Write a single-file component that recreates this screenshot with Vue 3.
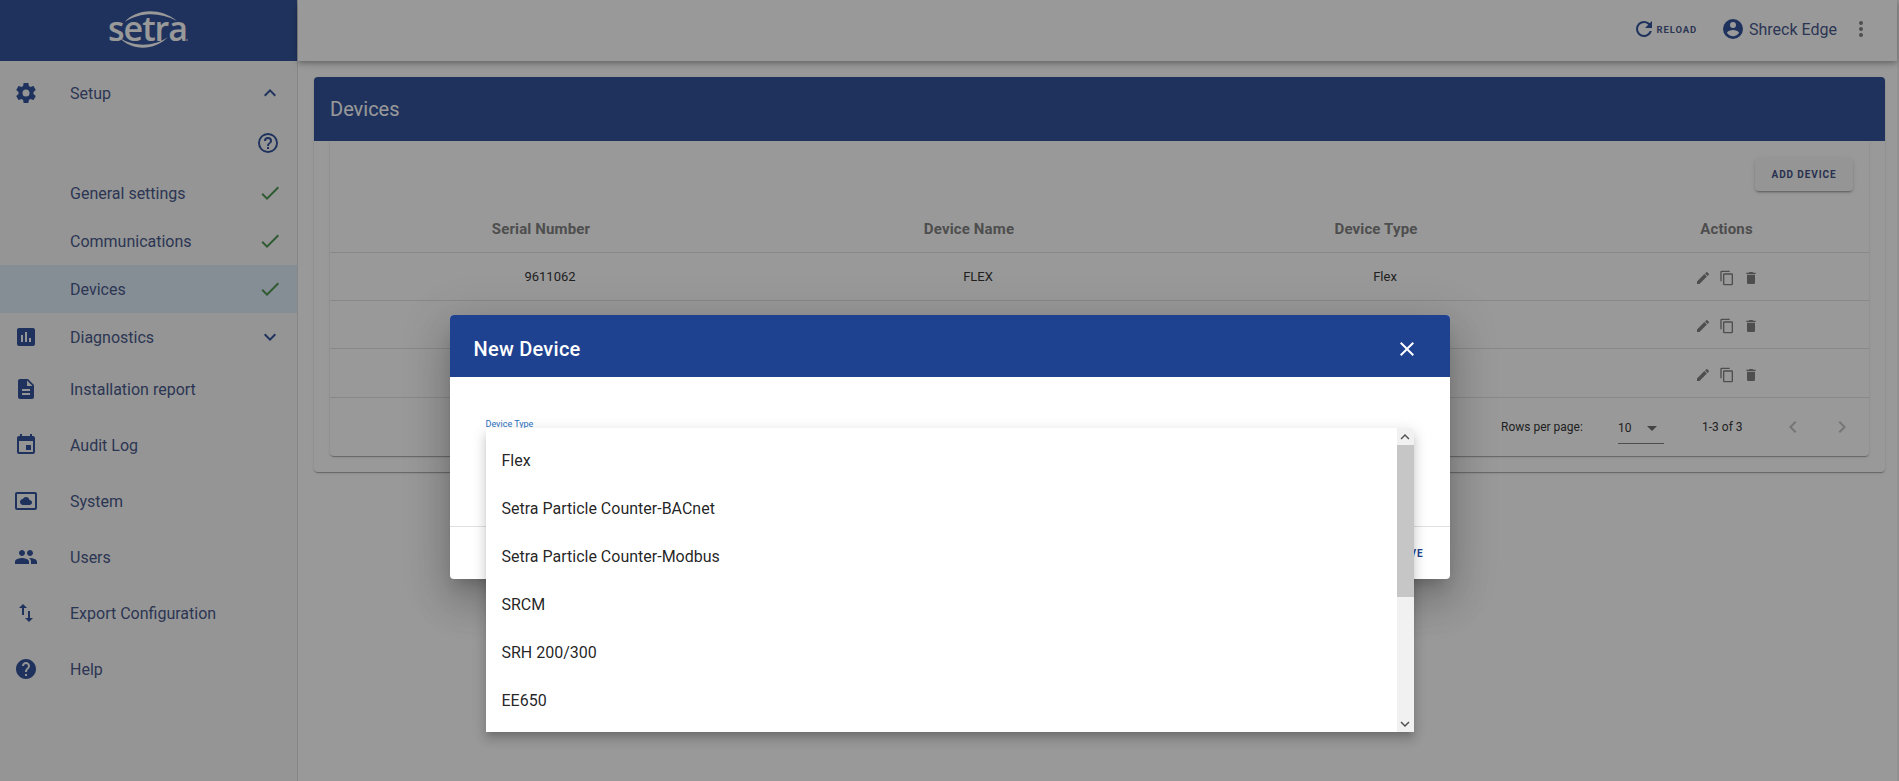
<script setup>
const P = {
  cog: 'M12,15.5A3.5,3.5 0 0,1 8.5,12A3.5,3.5 0 0,1 12,8.5A3.5,3.5 0 0,1 15.5,12A3.5,3.5 0 0,1 12,15.5M19.43,12.97C19.47,12.65 19.5,12.33 19.5,12C19.5,11.67 19.47,11.34 19.43,11L21.54,9.37C21.73,9.22 21.78,8.95 21.66,8.73L19.66,5.27C19.54,5.05 19.27,4.96 19.05,5.05L16.56,6.05C16.04,5.66 15.5,5.32 14.87,5.07L14.5,2.42C14.46,2.18 14.25,2 14,2H10C9.75,2 9.54,2.18 9.5,2.42L9.13,5.07C8.5,5.32 7.96,5.66 7.44,6.05L4.95,5.05C4.73,4.96 4.46,5.05 4.34,5.27L2.34,8.73C2.21,8.95 2.27,9.22 2.46,9.37L4.57,11C4.53,11.34 4.5,11.67 4.5,12C4.5,12.33 4.53,12.65 4.57,12.97L2.46,14.63C2.27,14.78 2.21,15.05 2.34,15.27L4.34,18.73C4.46,18.95 4.73,19.03 4.95,18.95L7.44,17.94C7.96,18.34 8.5,18.68 9.13,18.93L9.5,21.58C9.54,21.82 9.75,22 10,22H14C14.25,22 14.46,21.82 14.5,21.58L14.87,18.93C15.5,18.67 16.04,18.34 16.56,17.94L19.05,18.95C19.27,19.03 19.54,18.95 19.66,18.73L21.66,15.27C21.78,15.05 21.73,14.78 21.54,14.63L19.43,12.97Z',
  up: 'M7.41,15.41L12,10.83L16.59,15.41L18,14L12,8L6,14L7.41,15.41Z',
  down: 'M7.41,8.58L12,13.17L16.59,8.58L18,10L12,16L6,10L7.41,8.58Z',
  helpO: 'M11,18H13V16H11V18M12,2A10,10 0 0,0 2,12A10,10 0 0,0 12,22A10,10 0 0,0 22,12A10,10 0 0,0 12,2M12,20C7.59,20 4,16.41 4,12C4,7.59 7.59,4 12,4C16.41,4 20,7.59 20,12C20,16.41 16.41,20 12,20M12,6A4,4 0 0,0 8,10H10A2,2 0 0,1 12,8A2,2 0 0,1 14,10C14,12 11,11.75 11,15H13C13,12.75 16,12.5 16,10A4,4 0 0,0 12,6Z',
  check: 'M21,7L9,19L3.5,13.5L4.91,12.09L9,16.17L19.59,5.59L21,7Z',
  poll: 'M17,17H15V13H17M13,17H11V7H13M9,17H7V10H9M19,3H5C3.89,3 3,3.89 3,5V19A2,2 0 0,0 5,21H19A2,2 0 0,0 21,19V5C21,3.89 20.1,3 19,3Z',
  doc: 'M14 2H6c-1.1 0-2 .9-2 2v16c0 1.1.9 2 2 2h12c1.1 0 2-.9 2-2V8l-6-6zm2 16H8v-2h8v2zm0-4H8v-2h8v2zm-3-5V3.5L18.5 9H13z',
  event: 'M17 12h-5v5h5v-5zM16 1v2H8V1H6v2H5c-1.11 0-1.99.9-1.99 2L3 19c0 1.1.89 2 2 2h14c1.1 0 2-.9 2-2V5c0-1.1-.9-2-2-2h-1V1h-2zm3 18H5V8h14v11z',
  system: 'M9 16h6.5c1.38 0 2.5-1.12 2.5-2.5S16.88 11 15.5 11h-.05c-.24-1.69-1.69-3-3.45-3-1.4 0-2.6.83-3.16 2.02h-.16C7.17 10.18 6 11.45 6 13c0 1.66 1.34 3 3 3zM21 3H3c-1.1 0-2 .9-2 2v14c0 1.1.9 2 2 2h18c1.1 0 2-.9 2-2V5c0-1.1-.9-2-2-2zm0 16.01H3V4.99h18v14.02z',
  people: 'M16 11c1.66 0 2.99-1.34 2.99-3S17.66 5 16 5c-1.66 0-3 1.34-3 3s1.34 3 3 3zm-8 0c1.66 0 2.99-1.34 2.99-3S9.66 5 8 5C6.34 5 5 6.34 5 8s1.34 3 3 3zm0 2c-2.33 0-7 1.17-7 3.5V19h14v-2.5c0-2.33-4.67-3.5-7-3.5zm8 0c-.29 0-.62.02-.97.05 1.16.84 1.97 1.97 1.97 3.45V19h6v-2.5c0-2.33-4.67-3.5-7-3.5z',
  swap: 'M16 17.01V10h-2v7.01h-3L15 21l4-3.99h-3zM9 3L5 6.99h3V14h2V6.99h3L9 3z',
  help: 'M12 2C6.48 2 2 6.48 2 12s4.48 10 10 10 10-4.48 10-10S17.52 2 12 2zm1 17h-2v-2h2v2zm2.07-7.75l-.9.92C13.45 12.9 13 13.5 13 15h-2v-.5c0-1.1.45-2.1 1.17-2.83l1.24-1.26c.37-.36.59-.86.59-1.41 0-1.1-.9-2-2-2s-2 .9-2 2H8c0-2.21 1.79-4 4-4s4 1.79 4 4c0 .88-.36 1.68-.93 2.25z',
  reload: 'M17.65,6.35C16.2,4.9 14.21,4 12,4A8,8 0 0,0 4,12A8,8 0 0,0 12,20C15.73,20 18.84,17.45 19.73,14H17.65C16.83,16.33 14.61,18 12,18A6,6 0 0,1 6,12A6,6 0 0,1 12,6C13.66,6 15.14,6.69 16.22,7.78L13,11H20V4L17.65,6.35Z',
  account: 'M12,19.2C9.5,19.2 7.29,17.92 6,16C6.03,14 10,12.9 12,12.9C14,12.9 17.97,14 18,16C16.71,17.92 14.5,19.2 12,19.2M12,5A3,3 0 0,1 15,8A3,3 0 0,1 12,11A3,3 0 0,1 9,8A3,3 0 0,1 12,5M12,2A10,10 0 0,0 2,12A10,10 0 0,0 12,22A10,10 0 0,0 22,12A10,10 0 0,0 12,2Z',
  dots: 'M12,16A2,2 0 0,1 14,18A2,2 0 0,1 12,20A2,2 0 0,1 10,18A2,2 0 0,1 12,16M12,10A2,2 0 0,1 14,12A2,2 0 0,1 12,14A2,2 0 0,1 10,12A2,2 0 0,1 12,10M12,4A2,2 0 0,1 14,6A2,2 0 0,1 12,8A2,2 0 0,1 10,6A2,2 0 0,1 12,4Z',
  pencil: 'M20.71,7.04C21.1,6.65 21.1,6 20.71,5.63L18.37,3.29C18,2.9 17.35,2.9 16.96,3.29L15.12,5.12L18.87,8.87M3,17.25V21H6.75L17.81,9.93L14.06,6.18L3,17.25Z',
  copy: 'M19,21H8V7H19M19,5H8A2,2 0 0,0 6,7V21A2,2 0 0,0 8,23H19A2,2 0 0,0 21,21V7A2,2 0 0,0 19,5M16,1H4A2,2 0 0,0 2,3V17H4V3H16V1Z',
  trash: 'M19,4H15.5L14.5,3H9.5L8.5,4H5V6H19M6,19A2,2 0 0,0 8,21H16A2,2 0 0,0 18,19V7H6V19Z',
  close: 'M19,6.41L17.59,5L12,10.59L6.41,5L5,6.41L10.59,12L5,17.59L6.41,19L12,13.41L17.59,19L19,17.59L13.41,12L19,6.41Z',
  caret: 'M7,10L12,15L17,10H7Z',
  left: 'M15.41,16.58L10.83,12L15.41,7.41L14,6L8,12L14,18L15.41,16.58Z',
  right: 'M8.59,16.58L13.17,12L8.59,7.41L10,6L16,12L10,18L8.59,16.58Z'
}
const subs = ['General settings', 'Communications', 'Devices']
const navAfter = [
  { label: 'Installation report', icon: 'doc' },
  { label: 'Audit Log', icon: 'event' },
  { label: 'System', icon: 'system' },
  { label: 'Users', icon: 'people' },
  { label: 'Export Configuration', icon: 'swap' },
  { label: 'Help', icon: 'help' }
]
const headers = ['Serial Number', 'Device Name', 'Device Type']
const rows = [
  ['9611062', 'FLEX', 'Flex'],
  ['', '', ''],
  ['', '', '']
]
const options = ['Flex', 'Setra Particle Counter-BACnet', 'Setra Particle Counter-Modbus', 'SRCM', 'SRH 200/300', 'EE650']
</script>

<template>
  <div class="app">
    <aside class="side">
      <div class="logo">
        <svg viewBox="0 0 90 44">
          <path d="M21 13 C30 1 55 -3 73 12 C56 3 36 3 21 13Z" fill="#fff" />
          <path d="M16 29 C26 41 50 43 64 28 C50 38 30 38 16 29Z" fill="#fff" />
          <text x="4" y="32" class="logo-text">setra</text>
          <circle cx="83" cy="31" r=".8" fill="#fff" />
        </svg>
      </div>
      <nav class="nav">
        <div class="item">
          <svg class="ic" viewBox="0 0 24 24"><path :d="P.cog" /></svg>
          <span class="lbl">Setup</span>
          <svg class="end" viewBox="0 0 24 24"><path :d="P.up" /></svg>
        </div>
        <div class="helpline">
          <svg class="end" viewBox="0 0 24 24"><path :d="P.helpO" /></svg>
        </div>
        <div v-for="s in subs" :key="s" class="sub" :class="{ active: s === 'Devices' }">
          <span class="lbl">{{ s }}</span>
          <svg class="end chk" viewBox="0 0 24 24"><path :d="P.check" /></svg>
        </div>
        <div class="item diag">
          <svg class="ic" viewBox="0 0 24 24"><path :d="P.poll" /></svg>
          <span class="lbl">Diagnostics</span>
          <svg class="end" viewBox="0 0 24 24"><path :d="P.down" /></svg>
        </div>
        <div v-for="n in navAfter" :key="n.label" class="item">
          <svg class="ic" viewBox="0 0 24 24"><path :d="P[n.icon]" /></svg>
          <span class="lbl">{{ n.label }}</span>
        </div>
      </nav>
    </aside>

    <div class="column">
      <header class="top">
        <div class="reload">
          <svg viewBox="0 0 24 24"><path :d="P.reload" /></svg>
          <span>RELOAD</span>
        </div>
        <div class="user">
          <svg viewBox="0 0 24 24"><path :d="P.account" /></svg>
          <span>Shreck Edge</span>
        </div>
        <svg class="dots" viewBox="0 0 24 24"><path :d="P.dots" /></svg>
      </header>

      <main class="main">
        <section class="card">
          <div class="card-head">Devices</div>
          <div class="inner">
            <div class="toolbar"><button class="add">ADD DEVICE</button></div>
            <div class="row headrow">
              <div v-for="h in headers" :key="h" class="th shift">{{ h }}</div>
              <div class="th">Actions</div>
            </div>
            <div v-for="(r, i) in rows" :key="i" class="row datarow" :class="{ last: i === 2 }">
              <div v-for="(c, j) in r" :key="j" class="td">{{ c }}</div>
              <div class="td acts">
                <svg viewBox="0 0 24 24"><path :d="P.pencil" /></svg>
                <svg viewBox="0 0 24 24"><path :d="P.copy" /></svg>
                <svg viewBox="0 0 24 24"><path :d="P.trash" /></svg>
              </div>
            </div>
            <div class="foot">
              <span class="rpp">Rows per page:</span>
              <div class="select">
                <span>10</span>
                <svg viewBox="0 0 24 24"><path :d="P.caret" /></svg>
              </div>
              <span class="range">1-3 of 3</span>
              <svg class="pg" viewBox="0 0 24 24"><path :d="P.left" /></svg>
              <svg class="pg next" viewBox="0 0 24 24"><path :d="P.right" /></svg>
            </div>
          </div>
        </section>
      </main>
    </div>

    <div class="scrim"></div>

    <div class="dialog-layer">
      <div class="dialog">
        <div class="d-head">
          <span>New Device</span>
          <svg viewBox="0 0 24 24"><path :d="P.close" /></svg>
        </div>
        <div class="d-body">
          <label class="d-label">Device Type</label>
          <div class="menu">
            <div v-for="o in options" :key="o" class="opt">{{ o }}</div>
            <div class="sb">
              <div class="sb-btn"><svg viewBox="0 0 24 24"><path :d="P.up" /></svg></div>
              <div class="sb-track"><div class="sb-thumb"></div></div>
              <div class="sb-btn"><svg viewBox="0 0 24 24"><path :d="P.down" /></svg></div>
            </div>
          </div>
        </div>
        <div class="d-foot"><span class="save">SAVE</span></div>
      </div>
    </div>
  </div>
</template>

<style>
html, body { margin: 0; padding: 0; overflow: hidden; background: #fff; }
</style>

<style scoped>
.app {
  position: relative;
  display: flex;
  width: 1899px;
  height: 781px;
  overflow: hidden;
  font-family: Roboto, "Liberation Sans", sans-serif;
  background: #f0f0f0;
  color: #1e4290;
}
svg { display: block; fill: currentColor; flex: none; }

/* sidebar */
.side {
  width: 297px;
  flex: none;
  border-right: 1px solid #dcdcdc;
  background: #f8f8f8;
  display: flex;
  flex-direction: column;
}
.logo {
  height: 61px;
  background: #1e4290;
  display: flex;
  align-items: center;
  justify-content: center;
}
.logo svg { width: 90px; height: 44px; overflow: visible; }
.logo-text {
  font-family: "Open Sans", sans-serif;
  font-weight: 600;
  font-size: 34px;
  letter-spacing: -1px;
  fill: #fff;
}
.nav { display: flex; flex-direction: column; padding-top: 4px; }
.item { height: 56px; display: flex; align-items: center; padding: 0 15px 0 14px; }
.item.diag { height: 48px; }
.ic { width: 24px; height: 24px; margin-right: 32px; }
.lbl { flex: 1; font-size: 16px; line-height: 24px; padding-top: 1px; color: #35487f; }
.end { width: 24px; height: 24px; }
.helpline { height: 44px; margin-bottom: 4px; display: flex; justify-content: flex-end; align-items: center; padding-right: 17px; }
.sub { height: 48px; display: flex; align-items: center; padding: 0 15px 0 70px; }
.sub.active { background: #dcebf8; }
.chk { color: #3d8b40; }

/* top */
.column { flex: 1; min-width: 0; margin-right: 2px; display: flex; flex-direction: column; background: #fff; }
.top {
  height: 61px;
  flex: none;
  display: flex;
  align-items: center;
  justify-content: flex-end;
  padding: 0 24px 3px 0;
  box-sizing: border-box;
  background: #fff;
  box-shadow: 0 2px 4px -1px rgba(0,0,0,.2), 0 4px 5px 0 rgba(0,0,0,.14), 0 1px 10px 0 rgba(0,0,0,.12);
}
.reload { display: flex; align-items: center; margin-right: 24px; }
.reload svg { width: 24px; height: 24px; margin-right: 1px; }
.reload span { font-size: 9.5px; font-weight: 700; letter-spacing: .09em; color: #35487f; }
.user { display: flex; align-items: center; margin-right: 12px; font-size: 16px; color: #35487f; }
.user svg { width: 24px; height: 24px; margin-right: 4px; color: #1e4290; }
.dots { width: 24px; height: 24px; color: #757575; }

/* card */
.main { flex: 1; padding: 16px 12px 0 16px; }
.card {
  height: 395px;
  border-radius: 4px;
  background: #fff;
  box-shadow: 0 2px 1px -1px rgba(0,0,0,.2), 0 1px 1px 0 rgba(0,0,0,.14), 0 1px 3px 0 rgba(0,0,0,.12);
  padding: 0 16px;
  box-sizing: border-box;
  position: relative;
}
.card-head {
  margin: 0 -16px;
  height: 64px;
  line-height: 65px;
  padding-left: 16px;
  background: #1e4290;
  color: #fff;
  font-size: 20px;
  border-radius: 4px 4px 0 0;
}
.inner {
  height: 315px;
  border-radius: 0 0 4px 4px;
  box-shadow: 0 2px 1px -1px rgba(0,0,0,.2), 0 1px 1px 0 rgba(0,0,0,.14), 0 1px 3px 0 rgba(0,0,0,.12);
  display: flex;
  flex-direction: column;
}
.toolbar { height: 64px; display: flex; justify-content: flex-end; align-items: flex-end; padding-right: 16px; box-sizing: border-box; padding-bottom: 14px; }
.add {
  width: 98px;
  height: 33px;
  border: 0;
  border-radius: 4px;
  background: #f8f8f8;
  color: #2d4076;
  font-family: Roboto, sans-serif;
  font-size: 10px;
  font-weight: 700;
  letter-spacing: .09em;
  padding: 0;
  box-shadow: 0 3px 1px -2px rgba(0,0,0,.2), 0 2px 2px 0 rgba(0,0,0,.14), 0 1px 5px 0 rgba(0,0,0,.12);
}
.row { display: grid; grid-template-columns: 440px 416px 398px 285px; border-bottom: 1px solid #e0e0e0; box-sizing: border-box; }
.headrow { height: 48px; align-items: center; }
.datarow { height: 48px; align-items: center; }
.datarow.last { height: 49px; }
.th { text-align: center; font-size: 15px; font-weight: 700; color: #757575; letter-spacing: .01em; }
.th.shift { padding-right: 18px; }
.td { text-align: center; font-size: 13px; color: #212121; }
.acts { display: flex; justify-content: center; align-items: center; gap: 8px; padding-top: 3px; color: #757575; }
.acts svg { width: 16px; height: 16px; }
.foot {
  flex: 1;
  display: flex;
  align-items: center;
  font-size: 12px;
  color: #212121;
  padding-left: 1171px;
}
.rpp { width: 117px; flex: none; }
.select {
  width: 46px;
  height: 32px;
  box-sizing: border-box;
  display: flex;
  align-items: center;
  justify-content: space-between;
  border-bottom: 1px solid #757575;
  margin-top: 2px;
  flex: none;
}
.select svg { width: 24px; height: 24px; color: #616161; }
.range { margin-left: 38px; width: 41px; flex: none; white-space: nowrap; }
.pg { width: 24px; height: 24px; margin-left: 38px; color: #bdbdbd; }
.pg.next { margin-left: 25px; }

/* overlay */
.scrim { position: absolute; inset: 0; background: rgb(33,33,33); opacity: .46; }
.dialog-layer {
  position: absolute;
  inset: 0;
  display: flex;
  justify-content: center;
  align-items: flex-start;
  padding-top: 315px;
  box-sizing: border-box;
}
.dialog {
  width: 1000px;
  height: 264px;
  display: flex;
  flex-direction: column;
  background: #fff;
  border-radius: 4px;
  box-shadow: 0 11px 15px -7px rgba(0,0,0,.2), 0 24px 38px 3px rgba(0,0,0,.14), 0 9px 46px 8px rgba(0,0,0,.12);
}
.d-head {
  height: 62px;
  flex: none;
  display: flex;
  align-items: center;
  justify-content: space-between;
  padding: 6px 31px 0 24px;
  box-sizing: border-box;
  background: #1e4290;
  border-radius: 4px 4px 0 0;
  color: #fff;
  font-size: 20px;
  font-weight: 500;
  letter-spacing: .0125em;
}
.d-head svg { width: 24px; height: 24px; }
.d-body { flex: 1; position: relative; border-bottom: 1px solid #e0e0e0; }
.d-label { position: absolute; left: 36px; top: 41px; font-size: 9px; line-height: 12px; color: #2a72c0; }
.menu {
  position: absolute;
  left: 36px;
  top: 51px;
  z-index: 2;
  width: 928px;
  height: 304px;
  box-sizing: border-box;
  padding: 9px 17px 0 0;
  overflow: hidden;
  background: #fff;
  border-radius: 4px 4px 0 0;
  box-shadow: 0 5px 5px -3px rgba(0,0,0,.14), 0 8px 10px 1px rgba(0,0,0,.1), 0 3px 14px 2px rgba(0,0,0,.1);
}
.opt { height: 48px; line-height: 48px; padding-left: 16px; font-size: 16px; color: rgba(0,0,0,.87); }
.sb { position: absolute; top: 0; right: 0; bottom: 0; width: 17px; display: flex; flex-direction: column; background: #f1f1f1; }
.sb-btn { height: 17px; flex: none; color: #505050; display: flex; align-items: center; justify-content: center; }
.sb-btn svg { width: 18px; height: 18px; }
.sb-track { flex: 1; }
.sb-thumb { height: 152px; background: #c6c6c6; }
.d-foot { height: 52px; flex: none; display: flex; align-items: center; justify-content: flex-end; padding-right: 26px; }
.save { font-size: 10px; font-weight: 700; letter-spacing: .09em; color: #1e4290; }
</style>
